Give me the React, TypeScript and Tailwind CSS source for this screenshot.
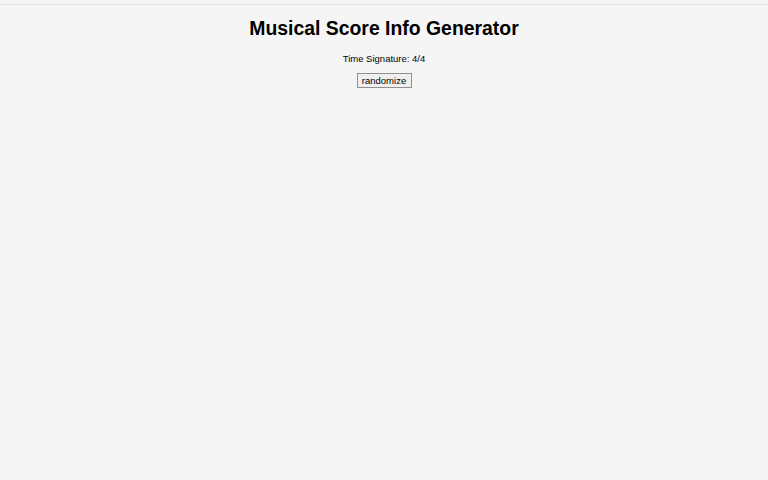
import React, { useState } from 'react';

const signatures = ['4/4', '3/4', '2/4', '6/8', '5/4', '7/8', '12/8'];

const App: React.FC = () => {
    const [timeSignature, setTimeSignature] = useState('4/4');

    const randomize = () => {
        const next = signatures[Math.floor(Math.random() * signatures.length)];
        setTimeSignature(next);
    };

    return (
        <div className="min-h-[480px] bg-[#f5f5f5] pt-1 font-['Liberation_Sans',Arial,sans-serif] text-black">
            <div className="border-t border-[#e0e0e0] flex flex-col items-center">
                <h1 className="mt-[12px] text-[19.4px] font-bold leading-[22px]">Musical Score Info Generator</h1>
                <p className="mt-[14px] text-[9.5px] leading-[11px]">Time Signature: {timeSignature}</p>
                <button
                    onClick={randomize}
                    className="mt-[9px] h-[15px] w-[55px] border border-[#8f8f8f] bg-[#efefef] text-[9.5px] leading-[13px]"
                >
                    randomize
                </button>
            </div>
        </div>
    );
};

export default App;
